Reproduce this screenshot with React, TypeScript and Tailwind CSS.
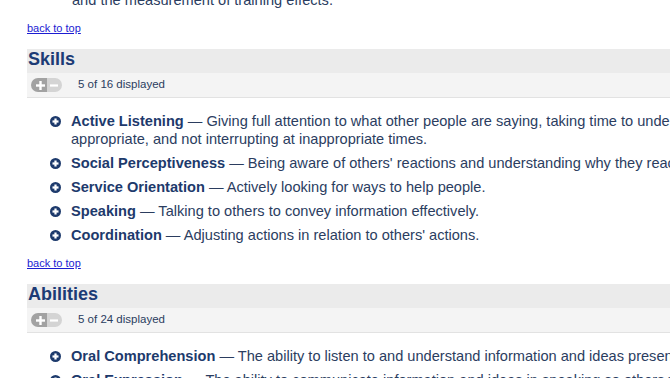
import React from "react";

const navy = "#1d3a6c";

function CirclePlus() {
  return (
    <svg width="11" height="11" viewBox="0 0 11 11" className="shrink-0">
      <circle cx="5.5" cy="5.5" r="5.5" fill={navy} />
      <rect x="2.5" y="4.4" width="6" height="2.2" fill="#fff" />
      <rect x="4.4" y="2.5" width="2.2" height="6" fill="#fff" />
    </svg>
  );
}

function Pill() {
  return (
    <div className="flex h-[14px] ml-[4px]">
      <div className="w-[16px] h-[14px] rounded-l-full bg-[#a2a2a2] flex items-center justify-center pl-[2px]">
        <svg width="9" height="9" viewBox="0 0 9 9">
          <rect x="0" y="3.3" width="9" height="2.4" fill="#fff" />
          <rect x="3.3" y="0" width="2.4" height="9" fill="#fff" />
        </svg>
      </div>
      <div className="w-[15px] h-[14px] rounded-r-full bg-[#d4d4d4] flex items-center justify-center pr-[2px]">
        <svg width="8" height="9" viewBox="0 0 8 9">
          <rect x="0" y="3.4" width="8" height="2.2" fill="#fff" />
        </svg>
      </div>
    </div>
  );
}

type Item = { title: string; desc: string };

function BackToTop({ className }: { className?: string }) {
  return (
    <div className={"h-[13px] text-[11px] leading-[13px] " + (className ?? "")}>
      <a href="#" className="text-[#1c1cd2] underline">
        back to top
      </a>
    </div>
  );
}

function Section({ title, count, items }: { title: string; count: string; items: Item[] }) {
  return (
    <section>
      <div className="bg-[#ebebeb] h-[24px] pl-[1px]">
        <h2 className="text-[18px] leading-[21px] font-bold text-[#1c3b75]">{title}</h2>
      </div>
      <div className="bg-[#f4f4f4] h-[25px] border-b border-[#e2e2e2] flex items-center">
        <Pill />
        <span className="ml-[16px] text-[11.5px] text-[#2b3d5f]">{count}</span>
      </div>
      <ul className="mt-[14px] pl-[23px] w-[990px] flex flex-col gap-[6px]">
        {items.map((it) => (
          <li key={it.title} className="flex items-start text-[14.6px] leading-[18px]">
            <span className="h-[18px] flex items-center">
              <CirclePlus />
            </span>
            <span className="ml-[10px] text-[#2b3d5f]">
              <b className="text-[#1d3a6c]">{it.title}</b> — {it.desc}
            </span>
          </li>
        ))}
      </ul>
    </section>
  );
}

export default function App() {
  const skills: Item[] = [
    {
      title: "Active Listening",
      desc: "Giving full attention to what other people are saying, taking time to understand the points being made, asking questions as appropriate, and not interrupting at inappropriate times.",
    },
    {
      title: "Social Perceptiveness",
      desc: "Being aware of others' reactions and understanding why they react as they do.",
    },
    { title: "Service Orientation", desc: "Actively looking for ways to help people." },
    { title: "Speaking", desc: "Talking to others to convey information effectively." },
    { title: "Coordination", desc: "Adjusting actions in relation to others' actions." },
  ];
  const abilities: Item[] = [
    {
      title: "Oral Comprehension",
      desc: "The ability to listen to and understand information and ideas presented through spoken words and sentences.",
    },
    {
      title: "Oral Expression",
      desc: "The ability to communicate information and ideas in speaking so others will understand.",
    },
  ];
  return (
    <div
      className="w-[670px] h-[378px] overflow-hidden bg-white"
      style={{ fontFamily: '"Liberation Sans", Arial, sans-serif' }}
    >
      <div className="pl-[27px] w-[1100px] flex flex-col">
        <div className="mt-[-9px] h-[18px] pl-[45px] text-[14.6px] leading-[18px] text-[#2b3d5f]">
          and the measurement of training effects.
        </div>
        <BackToTop className="mt-[13px]" />
        <div className="mt-[14px]">
          <Section title="Skills" count="5 of 16 displayed" items={skills} />
        </div>
        <BackToTop className="mt-[13px]" />
        <div className="mt-[14px]">
          <Section title="Abilities" count="5 of 24 displayed" items={abilities} />
        </div>
      </div>
    </div>
  );
}
